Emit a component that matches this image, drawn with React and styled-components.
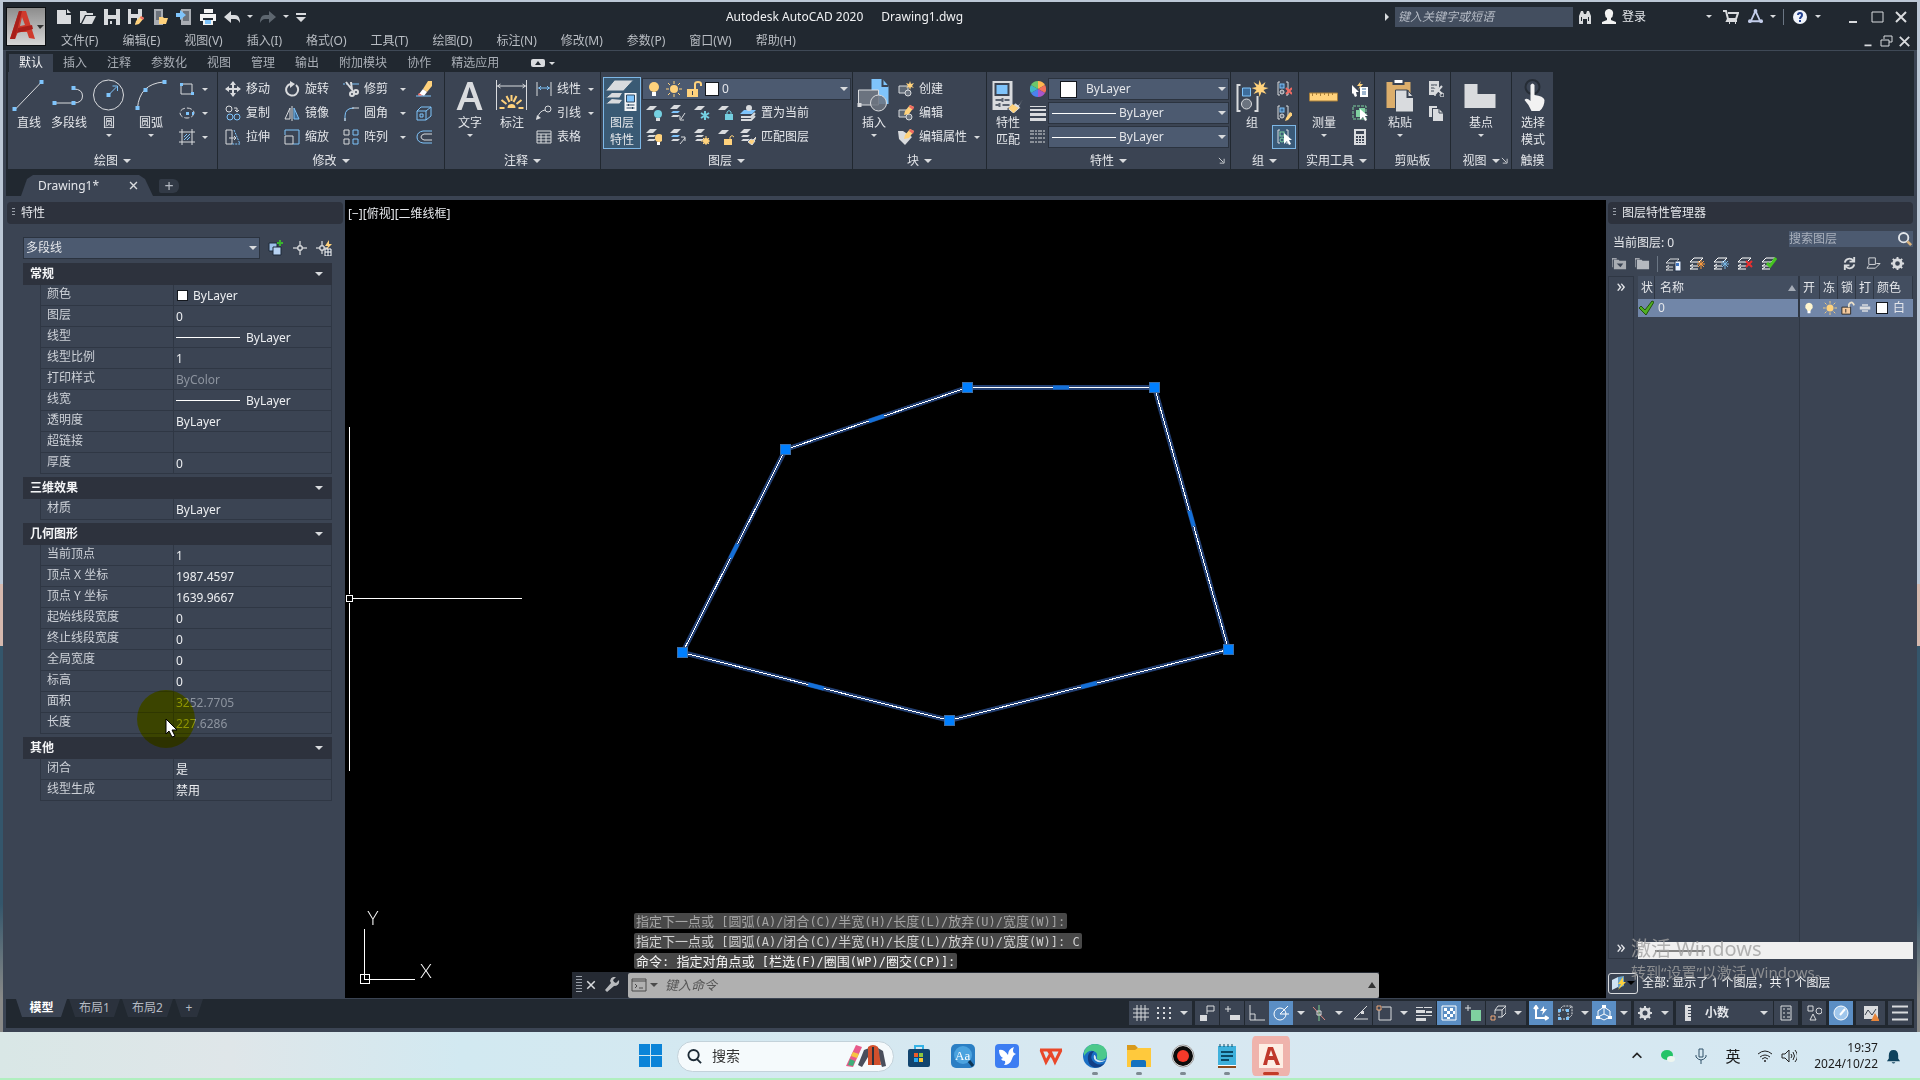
import React from 'react';
import styled, { createGlobalStyle, css } from 'styled-components';

const W = '#d9dbde';
const B = '#7fc4fb';
const Y = '#ffd27c';
const G = '#7fd0a0';
const T = '#74cfe0';
const R = '#f06a62';

const sheet = (x, y, fill) => <path d={`M${x + 4} ${y}h7l-4 4h-7z`} fill={fill} />;
const stack = (fill) => (
  <>
    {sheet(0, 0, W)}
    <path d="M3 6h7l-2 2H1z" fill={fill || W} />
    <path d="M3 10h7l-2 2H1z" fill={W} />
  </>
);
const brackets = (
  <>
    <path d="M4 1H2v13h2M10 1h2v13h-2" fill="none" stroke={W} />
    <rect x="4" y="3" width="4" height="4" fill="#3d6d9c" stroke={B} />
    <circle cx="6" cy="11" r="2" fill="#6b737f" stroke={W} />
  </>
);
const broom = <path d="M16 8l-3 3-2-1-3 3 4 3 3-4-1-1 3-2z" fill={Y} stroke={W} strokeWidth="1" />;

const ICONS = {
  new: <path d="M1 1h9v5h5v9H1zM11 0v4h4z" fill={W} />,
  open: <path d="M0 2h6l1 2h6v2H5L1 14H0zM6 7h10l-4 8H2z" fill={W} />,
  save: <path d="M0 0h16v16H0zM4 0v6h8V0zM4 10v6h8v-6z M6 12h2v3H6z" fill={W} fillRule="evenodd" />,
  saveas: <><path d="M0 0h14v8l-7 7H0zM3 0v5h7V0zM3 9v6h6V9z" fill={W} fillRule="evenodd" /><path d="M13 7l3 2-5 6-4 1 1-4z" fill={Y} /><path d="M13 7l3 2-1 2-3-2z" fill={R} /></>,
  phoneOpen: <><path d="M2 0h9v16H2z" fill="#a9adb3" /><path d="M4 2h5v9H4z" fill="#6d737c" /><path d="M7 8h4l1 1h4l-2 6H7z" fill={Y} /></>,
  phoneSave: <><path d="M5 0h10v16H5z" fill="#a9adb3" /><path d="M7 2h6v10H7z" fill="#6d737c" /><path d="M0 4h4V1l6 5-6 5V8H0z" fill={B} /></>,
  print: <><path d="M4 0h9v4H4zM0 5h16v7h-3V9H3v3H0zM3 11h10v5H3z" fill="#f2f2f2" /><path d="M5 11h6v4H5z" fill={B} /></>,
  undo: <path d="M0 8l7-6v4h4q5 0 5 8-2-4-5-4H7v4z" fill={W} />,
  redo: <path d="M16 8L9 2v4H5q-5 0-5 8 2-4 5-4h4v4z" fill="#5d666f" />,
  custom: <path d="M3 4h10v2H3zM3 8h10l-5 5z" fill={W} />,
  binoculars: <path d="M2 15V7l2-5h2l1 3h2l1-3h2l2 5v8h-4v-5H6v5zM4 8v4h1V8zM11 8v4h1V8z" fill={W} fillRule="evenodd" />,
  person: <path d="M8 0a4 4 0 0 1 4 5q0 3-2 4v2l5 2v2H1v-2l5-2V9Q4 8 4 5a4 4 0 0 1 4-5z" fill="#f2f2f2" />,
  cart: <path d="M0 2h3l2 8h8l2-6H5M5 10l-1 2h10M6 14h1M12 14h1" fill="none" stroke={W} strokeWidth="2" />,
  share: <><path d="M8 2L3 13h10z" fill="none" stroke="#c3cdea" strokeWidth="2" /><circle cx="8" cy="2" r="2" fill="#c3cdea" /><circle cx="2" cy="13" r="2" fill="#c3cdea" /><circle cx="14" cy="13" r="2" fill="#c3cdea" /></>,
  help: <><circle cx="8" cy="8" r="7" fill="#f1f4fa" /><path d="M6 6q0-2 2-2t2 2q0 1-1 2t-1 2M8 11v2" fill="none" stroke="#23418e" strokeWidth="2" /></>,
  min: <path d="M4 12h8v2H4z" fill={W} />,
  max: <path d="M3 3h11v10H3z" fill="none" stroke={W} strokeWidth="1" />,
  restore: <path d="M6 6V3h8v6h-3M3 7h8v6H3z" fill="none" stroke={W} strokeWidth="1" />,
  close: <path d="M3 3l10 10M13 3L3 13" stroke={W} strokeWidth="2" />,
  rect: <><path d="M2 3h11v10H2z" fill="none" stroke={W} /><path d="M1 2h3v3H1zM12 11h3v3h-3z" fill={B} /></>,
  ellipse: <><ellipse cx="8" cy="8" rx="7" ry="5" fill="none" stroke={W} strokeDasharray="5 2" /><path d="M7 7h3v3H7zM13 7h2v3h-2z" fill={B} /></>,
  hatch: <><path d="M0 3h16M0 13h16M3 0v16M13 0v16" stroke={W} /><path d="M5 8l3-3M5 11l6-6M8 11l3-3" stroke={B} strokeWidth="1" /></>,
  move: <><path d="M8 1v14M1 8h14" stroke={W} strokeWidth="2" /><path d="M8 0l3 4H5zM8 16l3-4H5zM0 8l4-3v6zM16 8l-4-3v6z" fill={W} /></>,
  rotate: <><path d="M6 3a6 6 0 1 0 6 1" fill="none" stroke={W} strokeWidth="2" /><path d="M6 0l5 3-5 4z" fill={W} /></>,
  trim: <><path d="M0 3h6" stroke={B} strokeDasharray="2 1" /><path d="M9 3h7" stroke={B} /><path d="M3 1l7 9M8 1l1 8" stroke={W} strokeWidth="2" /><circle cx="9" cy="13" r="2" fill="none" stroke={W} strokeWidth="2" /><circle cx="13" cy="11" r="2" fill="none" stroke={W} strokeWidth="2" /></>,
  erase: <><path d="M12 0h4v5l-5 6-4-3z" fill={Y} /><path d="M7 8l4 3-3 4-5-2z" fill="#fff" /><path d="M3 12l4 3H3q-2-1 0-3z" fill={R} /><path d="M0 15h15" stroke={B} /></>,
  copy: <><circle cx="4" cy="4" r="3" fill="none" stroke={W} /><circle cx="5" cy="12" r="3" fill="none" stroke={B} /><circle cx="12" cy="12" r="3" fill="none" stroke={B} /><path d="M9 3h3v4M10 5l2 2 2-2" fill="none" stroke={W} /></>,
  mirror: <><path d="M6 3v11H1z" fill="none" stroke={W} /><path d="M8 1v15" stroke={W} /><path d="M10 3v11h5z" fill="#3f6c96" stroke={B} /></>,
  fillet: <><path d="M2 16v-5q0-8 9-8" fill="none" stroke={B} /><path d="M2 16v-3M9 3h7" stroke={W} /></>,
  explode: <path d="M1 6h9v9H1zM1 6l4-4h10v9l-5 4M10 6l5-4M4 9h3v3H4z" fill="none" stroke={B} />,
  stretch: <><path d="M1 1h6v14H1z" fill="none" stroke={W} /><path d="M9 1l6 14H7" fill="none" stroke={B} strokeDasharray="2 1" /><path d="M4 9h7M9 7l2 2-2 2" fill="none" stroke={W} /></>,
  scale: <><path d="M1 6V1h14v14H9" fill="none" stroke={B} /><path d="M1 7h8v8H1z" fill="none" stroke={W} /></>,
  array: <><path d="M1 1h5v5H1zM1 10h5v5H1z" fill="none" stroke={W} /><path d="M10 1h5v5h-5zM10 10h5v5h-5z" fill="none" stroke={B} /></>,
  offset: <><path d="M16 2H7q-6 1-6 6t6 6h9" fill="none" stroke={B} /><path d="M16 5H8Q5 6 5 8t3 3h8" fill="none" stroke={W} /></>,
  linear: <><path d="M1 1v14M15 1v14" stroke={W} /><path d="M2 7h12M5 5L3 7l2 2M11 5l2 2-2 2" fill="none" stroke={B} /></>,
  leader: <><path d="M1 14Q3 6 9 5" fill="none" stroke={W} /><circle cx="12" cy="4" r="3" fill="none" stroke={W} /><path d="M0 15l1-5 4 3z" fill={W} /></>,
  table: <path d="M1 2h14v12H1zM1 5h14M1 8h14M1 11h14M5 5v9M10 5v9" fill="none" stroke={W} />,
  bulb: <><circle cx="8" cy="6" r="5" fill={Y} /><path d="M6 11h4v4H6z" fill="#fff" /></>,
  bulbPale: <><path d="M8 1a5 5 0 0 1 3 9l-1 2H6l-1-2a5 5 0 0 1 3-9z" fill="#fff6cf" /><path d="M6 12h4v3H6z" fill="#fff" /></>,
  sun: <><circle cx="8" cy="8" r="4" fill={Y} /><path d="M8 0v3M8 13v3M0 8h3M13 8h3M2 2l2 2M12 12l2 2M14 2l-2 2M4 12l-2 2" stroke={Y} /></>,
  unlock: <><path d="M1 8h11v8H1z" fill={Y} /><path d="M9 8V3q0-2 3-2t3 2v2" fill="none" stroke={Y} strokeWidth="2" /><path d="M6 10h1v4H6z" fill="#3b4453" /></>,
  layOff: <>{sheet(0, 1, W)}<circle cx="12" cy="9" r="4" fill={T} /><path d="M10 13h4v3h-4z" fill={W} /></>,
  layIso: <>{stack(B)}<path d="M15 8l-4 6M10 11v4h4" fill="none" stroke={W} /></>,
  layFreeze: <>{sheet(0, 1, W)}<path d="M11 6v9M7 8l8 5M15 8l-8 5" stroke={T} strokeWidth="2" /></>,
  layLock: <>{sheet(0, 1, W)}<path d="M7 9h8v6H7z" fill={T} /><path d="M9 9V7q2-3 4 0v2" fill="none" stroke={T} strokeWidth="1" /></>,
  layCurrent: <><path d="M4 5h12l-4 4H0z" fill={B} /><circle cx="9" cy="3" r="3" fill={W} /><path d="M15 8l-4 4H1M15 11l-4 4H1" fill="none" stroke={W} strokeWidth="2" /></>,
  layOn: <>{stack()}<circle cx="13" cy="9" r="4" fill={Y} /><path d="M11 13h3v3h-3z" fill="#fff" /></>,
  layUniso: <>{stack(B)}<path d="M10 15l5-6M11 8h4v4" fill="none" stroke={W} /></>,
  layThaw: <>{stack()}<circle cx="12" cy="12" r="3" fill={Y} /><path d="M12 7v9M7 12h9M9 9l6 6M15 9l-6 6" stroke={Y} /></>,
  layUnlock: <>{sheet(0, 1, W)}<path d="M6 10h8v6H6z" fill={Y} /><path d="M12 10V8q2-3 4 0" fill="none" stroke={Y} /></>,
  layMatch: <>{stack()}{broom}</>,
  create: <><path d="M1 5h9v7H1z" fill="#5d6774" stroke={W} /><circle cx="10" cy="12" r="3" fill="#6b737f" stroke={W} /><path d="M12 0l1 3 3-1-2 3 2 2-3-1-1 3-1-3-3 1 2-2-2-3 3 1z" fill={Y} /></>,
  edit: <><path d="M1 5h9v7H1z" fill="#5d6774" stroke={W} /><circle cx="11" cy="12" r="3" fill="#6b737f" stroke={W} /><path d="M6 10l1-4 5-6 4 2-5 7z" fill={Y} /><path d="M12 0l4 2-1 3-4-3z" fill={R} /></>,
  attr: <><path d="M0 2h5l9 6-7 8-6-6z" fill={W} /><path d="M6 10l1-4 5-6 4 2-5 7z" fill={Y} /><path d="M12 0l4 2-1 3-4-3z" fill={R} /></>,
  lineweight: <path d="M0 1h16v1H0zM0 4h16v2H0zM0 8h16v3H0zM0 13h16v3H0z" fill={W} />,
  linetype: <path d="M0 2h16M0 5h16M0 9h16M0 13h16" stroke={W} strokeDasharray="4 1 2 1" />,
  wheel: <><path d="M8 8V0a8 8 0 0 1 7 4z" fill="#ffb64f" /><path d="M8 8l7-4a8 8 0 0 1 0 8z" fill="#f2705b" /><path d="M8 8l7 4a8 8 0 0 1-7 4z" fill="#a957c9" /><path d="M8 8v8a8 8 0 0 1-7-4z" fill="#4b82ee" /><path d="M8 8l-7 4a8 8 0 0 1 0-8z" fill="#3fb7c4" /><path d="M8 8L1 4a8 8 0 0 1 7-4z" fill="#6cc66a" /></>,
  ungroup: <>{brackets}<path d="M10 7l6 6M16 7l-6 6" stroke={R} strokeWidth="2" /></>,
  groupEdit: <>{brackets}<path d="M14 7l3 2-5 6-3 1 1-3z" fill={Y} /></>,
  groupSel: <><path d="M4 1H2v13h2M10 1h2v13h-2" fill="none" stroke={W} /><rect x="4" y="3" width="4" height="4" fill="none" stroke={G} /><circle cx="6" cy="11" r="2" fill="none" stroke={G} /><path d="M8 4v11l3-3 2 4 2-1-2-4h3z" fill="#fff" /></>,
  quickSel: <><path d="M8 6h8v10H8z" fill="#fff" /><path d="M10 8h4M10 11h4M10 13h4" stroke="#3d6d9c" /><path d="M0 4l7 7H4l1 4-2 1-2-4-1 1z" fill="#fff" /><path d="M9 0L5 5h3L6 9l5-6H8z" fill={Y} /></>,
  selAll: <><path d="M1 1h13v13H1z" fill="none" stroke={G} strokeDasharray="3 1" /><path d="M4 5h3V3h6v6h-3v3H4z" fill={G} /><path d="M8 4v11l3-3 2 4 2-1-2-4h3z" fill="#fff" /></>,
  calc: <path d="M2 0h12v16H2zM4 2v3h8V2zM4 7v2h2V7zM7 7v2h2V7zM10 7v2h2V7zM4 10v2h2v-2zM7 10v2h2v-2zM10 10v2h2v-2zM4 13v1h2v-1zM7 13v1h2v-1zM10 13v1h2v-1z" fill={W} fillRule="evenodd" />,
  cut: <><path d="M1 0h10v7l-4 7H1z" fill={W} /><path d="M3 4h6M3 7h5M3 10h3" stroke="#3b4453" /><path d="M6 5l8 8M14 5l-7 8" stroke={W} strokeWidth="2" /><circle cx="7" cy="14" r="1" fill={W} /><circle cx="14" cy="14" r="2" fill="none" stroke={W} /></>,
  copyClip: <><path d="M1 1h8v2H4v9H1z" fill={W} /><path d="M5 4h6l4 4v8H5z" fill={W} /><path d="M11 4v4h4" fill="none" stroke="#3b4453" /></>,
  addSel: <><path d="M1 3h8v8H1z" fill="#9cc0ea" stroke="#1c2838" /><path d="M5 7h8v8H5z" fill="#b7d2f2" stroke="#1c2838" /><path d="M12 0v6M9 3h6" stroke="#39b52e" strokeWidth="2" /></>,
  pick: <><path d="M8 1v14M1 8h14" stroke="#fff" /><path d="M6 6h4v4H6z" fill="#3b4453" stroke="#fff" /></>,
  quick: <><path d="M6 1v13M0 8h12" stroke="#fff" /><path d="M4 6h4v4H4z" fill="#3b4453" stroke="#fff" /><path d="M13 0L9 6h3l-2 4 6-6h-3z" fill={Y} /><path d="M9 9h6v7H9zM9 12h6M12 9v7" fill="#26344a" stroke="#fff" /></>,
  folderFilter: <><path d="M2 4h5l1 1h7v9H2z" fill="#a9adb3" /><path d="M0 12V3h5" fill="none" stroke={W} /><path d="M5 8h7l-3 4z" fill="#3b4453" /></>,
  folder: <><path d="M2 4h5l1 1h7v9H2z" fill="#b5b9bf" /><path d="M0 12V3h5" fill="none" stroke={W} /></>,
  layState: <><path d="M5 3h9l-4 4H1zM4 9l-3 2h7M4 12l-3 2h7" fill="none" stroke={W} /><path d="M10 5h6v10h-6z" fill="#eaf2ff" stroke="#26344a" /><path d="M11 7h3v3h-3z" fill="#3f76c4" /></>,
  layNew: <><path d="M5 2h9l-4 4H1zM4 8l-3 2h8M4 11l-3 2h8" fill="none" stroke="#fff" /><path d="M12 4v9M8 8h8M9 5l6 6M15 5l-6 6" stroke="#ff9c3d" /></>,
  layNewFrz: <><path d="M5 2h9l-4 4H1zM4 8l-3 2h8M4 11l-3 2h8" fill="none" stroke="#fff" /><path d="M12 4v9M8 8h8M9 5l6 6M15 5l-6 6" stroke="#78b7e6" /></>,
  layDel: <><path d="M5 2h9l-4 4H1zM4 8l-3 2h8M4 11l-3 2h8" fill="none" stroke="#fff" /><path d="M9 5l6 6M15 5l-6 6" stroke="#ea2f2f" strokeWidth="2" /></>,
  laySet: <><path d="M5 2h9l-4 4H1zM4 8l-3 2h8M4 11l-3 2h8" fill="none" stroke="#fff" /><path d="M6 7l3 3 6-8" fill="none" stroke="#45c520" strokeWidth="3" /></>,
  refresh: <path d="M3 7a5 5 0 0 1 9-2M13 9a5 5 0 0 1-9 2M13 1v5H8M3 15v-5h5" fill="none" stroke={W} strokeWidth="2" />,
  filterLine: <path d="M3 2h7v7H3zM1 13h9l5-5h-4M1 13l2-3" fill="none" stroke={W} />,
  gear: <><circle cx="8" cy="8" r="4" fill="none" stroke={W} strokeWidth="3" /><path d="M8 1v3M8 12v3M1 8h3M12 8h3M3 3l2 2M11 11l2 2M13 3l-2 2M5 11l-2 2" stroke={W} strokeWidth="2" /></>,
  check: <path d="M1 8l2-2 4 4 7-9 2 1-8 13z" fill="#4fae22" stroke="#23500d" />,
  printer: <path d="M4 3h8v2H4zM1 6h14v4H1zM4 11h8v2H4z" fill={W} />,
  unlockDark: <><path d="M1 7h10v8H1z" fill="#f4c99c" stroke="#222" /><path d="M9 7V4q2-4 5-1l1 2" fill="none" stroke="#eadfc8" strokeWidth="2" /><path d="M5 9h1v4H5z" fill="#222" /></>,
  grid: <path d="M4 0v16M8 0v16M12 0v16M0 4h16M0 8h16M0 12h16" stroke={W} />,
  dots: <path d="M1 2h2v2H1zM7 2h2v2H7zM13 2h2v2h-2zM1 7h2v2H1zM7 7h2v2H7zM13 7h2v2h-2zM1 12h2v2H1zM7 12h2v2H7zM13 12h2v2h-2z" fill={W} />,
  infer: <><path d="M8 9V1h7v5H8" fill="none" stroke={W} /><path d="M1 10h7v6H1z" fill={W} /></>,
  dyn: <><path d="M4 1v6M1 4h6" stroke={W} /><path d="M6 10h10v5H6z" fill={W} /></>,
  ortho: <path d="M1 0v15h15M1 9h5v6" fill="none" stroke={W} />,
  polar: <><circle cx="7" cy="9" r="6" fill="none" stroke="#fff" /><path d="M7 9h9M7 9l8-8" stroke="#fff" /></>,
  iso: <><path d="M2 2l12 13" stroke="#e08a80" /><path d="M8 0v16" stroke="#7fcf90" /><path d="M6 6h4v4H6z" fill="none" stroke={W} /></>,
  otrack: <><path d="M15 1L2 14h14" fill="none" stroke={W} /><path d="M9 6h3v3H9z" fill={W} /></>,
  osnap: <><path d="M3 5v10h12V2H6" fill="none" stroke={W} /><path d="M1 1h4v4H1z" fill="none" stroke="#f0a878" strokeWidth="1" /></>,
  lw: <path d="M0 2h7v1H0zM8 2h8v1H8zM0 5h9v3H0zM10 6h6v2h-6zM0 10h16v1H0zM0 13h10v3H0z" fill={W} />,
  transp: <><path d="M1 1h14v14H1z" fill="none" stroke="#fff" strokeWidth="1" /><path d="M3 3h3v3H3zM9 3h3v3H9zM6 6h3v3H6zM12 6h2v3h-2zM3 9h3v3H3zM9 9h3v3H9zM6 12h3v2H6z" fill="#fff" /></>,
  cycle: <><path d="M3 0v6M0 3h6" stroke={W} /><path d="M6 5h10v11H6z" fill={G} /></>,
  osnap3: <><path d="M5 9V5l3-4h8v7l-4 4H8M5 5h7v7M12 5l4-4" fill="none" stroke={W} /><path d="M1 11h4v4H1z" fill="none" stroke="#f0a878" strokeWidth="1" /></>,
  ducs: <><path d="M3 2v11h12M1 4l2-3 2 3M12 11l3 2-3 2" fill="none" stroke="#fff" strokeWidth="2" /><path d="M11 1L7 6h3l-1 4 5-6h-3z" fill="#fff" /></>,
  selFilter: <><path d="M2 5h9v9H2zM2 5l4-4h9v9l-4 4M11 5l4-4" fill="none" stroke={W} strokeDasharray="2 1" /><path d="M1 4h3v3H1zM9 4h3v3H9zM1 12h3v3H1zM9 12h3v3H9z" fill={B} /></>,
  gizmo: <><path d="M8 2l6 4v6l-6 3-6-3V6zM8 2v7l6 3M8 9l-6 3" fill="none" stroke="#fff" /><path d="M6 0h4v3H6zM0 11h4v3H0zM12 11h4v3h-4z" fill="#fff" /></>,
  ruler: <path d="M5 0h6v2H8v1h3v2H8v1h3v2H8v1h3v2H8v1h3v4H5z" fill={W} />,
  qprops: <path d="M3 1h10v14H3zM5 4h2M9 4h3M5 8h2M9 8h3M5 12h2M9 12h3" fill="none" stroke={W} strokeWidth="1" />,
  isolate: <><path d="M2 1h5v5H2z" fill="none" stroke={W} /><circle cx="13" cy="6" r="3" fill="none" stroke={W} /><path d="M7 9l3 6H4z" fill="none" stroke={W} /></>,
  perf: <><circle cx="8" cy="8" r="7" fill="#9fc6ec" stroke="#fff" /><path d="M7 10l5-6" stroke="#fff" strokeWidth="2" /></>,
  hw: <><path d="M1 1h14v13H1z" fill={W} /><path d="M2 10l3-5 4 5 4-6" fill="none" stroke="#39424e" /><path d="M12 8l5 8H8z" fill="#e8863a" /></>,
  menu: <path d="M0 1h16v1H0zM0 7h16v1H0zM0 14h16v1H0z" fill={W} stroke={W} />,
  wrench: <path d="M15 3l-3 3-2-1-1-2 3-3q-5-1-6 4l1 2-6 7 2 2 7-6q6 0 5-6z" fill="#b8babd" />,
  terminal: <path d="M1 2h14v12H1zM1 4h14M4 7l2 2-2 2M8 11h4" fill="none" stroke="#4a4a4a" strokeWidth="1" />,
  chevron: <path d="M3 10l5-5 5 5" fill="none" stroke="#222" strokeWidth="2" />,
  wechat: <><ellipse cx="7" cy="7" rx="6" ry="5" fill="#24c367" /><ellipse cx="11" cy="11" rx="4" ry="3" fill="#eef6f0" /></>,
  mic: <path d="M6 1h4v8H6zM3 7v2q5 6 10 0V7M8 12v4" fill="none" stroke="#2f5068" strokeWidth="1" />,
  wifi: <><path d="M1 6q7-6 14 0M3 9q5-4 10 0M5 11q3-3 6 0" fill="none" stroke="#222" /><circle cx="8" cy="13" r="1" fill="#222" /></>,
  speaker: <path d="M1 6h3l4-4v12l-4-4H1zM10 6q2 2 0 4M12 4q3 4 0 8M14 2q5 6 0 12" fill="none" stroke="#222" />,
  bell: <path d="M8 1q5 0 5 6v3l2 3H1l2-3V7q0-6 5-6zM6 14h4q-2 3-4 0z" fill="#10435e" />,
  search: <path d="M7 1a5 5 0 1 1 0 11 5 5 0 1 1 0-11M11 11l4 4" fill="none" stroke="#1d2b36" strokeWidth="2" />,
  magnifier: <><circle cx="6" cy="6" r="5" fill="#4d5a6e" stroke="#e3e6ea" strokeWidth="2" /><path d="M10 10l4 4" stroke="#d9b27c" strokeWidth="3" /></>,
};

const BIG = {
  line: <><path d="M3 30L29 3" stroke={W} strokeWidth="1" /><path d="M0 28h4v4H0zM27 1h4v4h-4z" fill={B} /></>,
  pline: <><path d="M2 24h19q9 0 9-7t-9-7" fill="none" stroke={W} /><path d="M0 22h4v4H0zM19 22h4v4h-4zM19 7h4v4h-4z" fill={B} /></>,
  circle: <><circle cx="16" cy="16" r="15" fill="none" stroke={W} /><path d="M16 16l8-8M20 7h5v5" fill="none" stroke={B} strokeWidth="1" /><path d="M14 14h4v4h-4z" fill={B} /></>,
  arc: <><path d="M3 29Q5 5 29 3" fill="none" stroke={W} strokeWidth="1" /><path d="M1 27h4v4H1zM9 9h4v4H9zM28 1h4v4h-4z" fill={B} /></>,
  text: <path d="M3 31L14 3h5l10 28h-5l-3-8H11l-3 8zM13 19h7l-4-11z" fill={W} fillRule="evenodd" />,
  dim: <><path d="M1 1v30M31 1v30" stroke={W} /><path d="M2 7h28M5 5L2 7l3 2M27 5l3 2-3 2" fill="none" stroke={W} /><path d="M4 29h5M23 29h5M6 21l5 4M26 21l-5 4M11 17l3 6M21 17l-3 6M16 16v6" stroke={Y} strokeWidth="2" /><path d="M12 29a4 4 0 0 1 8 0z" fill={Y} /></>,
  layerProps: <><path d="M9 1h19L18 12H0zM6 14l-6 5h14l3-5M6 20l-6 5h14l3-4" fill={W} stroke="#3a5a74" /><path d="M19 14h12v18H19z" fill="#f4f6f8" /><path d="M21 16h8v7h-8z" fill={B} stroke="#2c4760" /><path d="M21 26h8M21 29h8M23 25v2M27 28v2" stroke="#2c4760" /></>,
  insert: <><path d="M14 0h11l6 7v18H14z" fill={B} /><path d="M25 0v7h6" fill="none" stroke="#3b4453" strokeWidth="2" /><path d="M1 11h20v15H1z" fill="#6b737f" stroke={W} /><circle cx="21" cy="24" r="8" fill="#6b737fdd" stroke={W} /><path d="M0 24h4v4H0z" fill={W} /></>,
  matchProps: <><path d="M1 2h20v29H1z" fill={W} /><path d="M4 5h13v11H4z" fill={B} stroke="#3b4453" strokeWidth="2" /><path d="M4 21h6M13 21h5M4 26h4M11 26h7M11 19v4M8 24v4" stroke="#5a6370" strokeWidth="2" /><path d="M32 19l-5 7-3-2-8 6 6 5 7-6-1-2z" fill={W} stroke="#3b4453" /><path d="M17 29l4-4 6 4-5 5z" fill={Y} /></>,
  group: <><path d="M5 6H2v26h3M19 32h3V17" fill="none" stroke={W} strokeWidth="2" /><path d="M7 9h8v8H7z" fill="#3d6d9c" stroke={B} /><circle cx="11" cy="25" r="5" fill="#6b737f" stroke={W} /><path d="M24 1l2 5 4-3-2 5 5 1-5 2 3 4-5-2-2 5-1-5-5 2 3-4-5-2 5-1-3-5 5 3z" fill={Y} /></>,
  measure: <path d="M2 14h28v8H2zM5 14v3M9 14v2M13 14v3M17 14v2M21 14v3M25 14v2" fill={Y} stroke="#a87f3a" strokeWidth="1" />,
  paste: <><path d="M3 3h24v26H3z" fill="#dcae6b" /><path d="M10 0h10v5H10z" fill="#fff" stroke="#3b4453" strokeWidth="2" /><path d="M12 11h12l6 7v15H12z" fill={W} stroke="#3b4453" /><path d="M24 11v7h6" fill="none" stroke="#3b4453" strokeWidth="2" /></>,
  base: <path d="M0 5h13v10h18v14H0z" fill={W} />,
  hand: <><circle cx="16" cy="8" r="7" fill="none" stroke="#262d36" strokeWidth="2" /><path d="M14 6q2-3 4 0v10q9 1 10 5 0 7-5 11h-8q-3-7-7-11 2-3 6 1z" fill="#f2f2f2" /></>,
};

function Icon({ name, size = 16 }) {
  const big = BIG[name];
  return (
    <svg width={size} height={size} viewBox={big ? '0 0 33 34' : '0 0 16 16'} aria-hidden="true">
      {big || ICONS[name]}
    </svg>
  );
}

const PROPERTY_SECTIONS = [
  {
    title: '常规',
    rows: [
      { label: '颜色', value: 'ByLayer', swatch: true },
      { label: '图层', value: '0' },
      { label: '线型', value: 'ByLayer', line: true },
      { label: '线型比例', value: '1' },
      { label: '打印样式', value: 'ByColor', muted: true },
      { label: '线宽', value: 'ByLayer', line: true },
      { label: '透明度', value: 'ByLayer' },
      { label: '超链接', value: '' },
      { label: '厚度', value: '0' },
    ],
  },
  { title: '三维效果', rows: [{ label: '材质', value: 'ByLayer' }] },
  {
    title: '几何图形',
    rows: [
      { label: '当前顶点', value: '1' },
      { label: '顶点 X 坐标', value: '1987.4597' },
      { label: '顶点 Y 坐标', value: '1639.9667' },
      { label: '起始线段宽度', value: '0' },
      { label: '终止线段宽度', value: '0' },
      { label: '全局宽度', value: '0' },
      { label: '标高', value: '0' },
      { label: '面积', value: '3252.7705', muted: true },
      { label: '长度', value: '227.6286', muted: true },
    ],
  },
  {
    title: '其他',
    rows: [
      { label: '闭合', value: '是' },
      { label: '线型生成', value: '禁用' },
    ],
  },
];

const MENUS = ['文件(F)', '编辑(E)', '视图(V)', '插入(I)', '格式(O)', '工具(T)', '绘图(D)', '标注(N)', '修改(M)', '参数(P)', '窗口(W)', '帮助(H)'];
const TABS = ['默认', '插入', '注释', '参数化', '视图', '管理', '输出', '附加模块', '协作', '精选应用'];

const HISTORY = [
  { text: '指定下一点或 [圆弧(A)/闭合(C)/半宽(H)/长度(L)/放弃(U)/宽度(W)]:', color: '#a4a4a4' },
  { text: '指定下一点或 [圆弧(A)/闭合(C)/半宽(H)/长度(L)/放弃(U)/宽度(W)]: C', color: '#d0d0d0' },
  { text: '命令: 指定对角点或 [栏选(F)/圈围(WP)/圈交(CP)]:', color: '#f4f4f4' },
];

const STATUS = [
  [['grid', 24, '栅格'], ['dots', 22, '捕捉'], ['caret', 17]],
  [['infer', 25, '推断约束'], ['dyn', 25, '动态输入'], ['ortho', 24, '正交'], ['polar', 24, '极轴', true], ['caret', 15], ['iso', 22, '等轴测'], ['caret', 18], ['otrack', 25, '对象捕捉追踪'], ['osnap', 22, '对象捕捉'], ['caret', 17], ['lw', 25, '线宽'], ['transp', 24, '透明度', true], ['cycle', 25, '选择循环'], ['osnap3', 24, '三维对象捕捉'], ['caret', 16]],
  [['ducs', 24, '动态 UCS', true], ['selFilter', 24, '选择过滤'], ['caret', 15], ['gizmo', 24, '小控件', true], ['caret', 15]],
  [['gear', 22, '切换工作空间'], ['caret', 17]],
];

const VERTICES = [[785, 449], [967, 387], [1154, 387], [1228, 649], [949, 720], [682, 652]];

function Combo({ label, value, children, ...rest }) {
  return (
    <ComboBox {...rest}>
      {children}
      <select aria-label={label} defaultValue={value}>
        <option>{value}</option>
      </select>
      <Caret $size={4} />
    </ComboBox>
  );
}

function Large({ icon, label, sub, caret, w, active }) {
  return (
    <LargeButton $w={w} $active={active}>
      <Icon name={icon} size={34} />
      <span>{label}</span>
      {sub && <span>{sub}</span>}
      {caret && <Caret $size={3} />}
    </LargeButton>
  );
}

function ToolItem({ icon, label, caret }) {
  return (
    <Tool aria-label={label || icon}>
      <Icon name={icon} />
      {label}
      {caret && <CaretSlot><Caret $size={3} /></CaretSlot>}
    </Tool>
  );
}

function Panel({ title, w, noCaret, launcher, children }) {
  return (
    <PanelBox $w={w}>
      <PanelBody>{children}</PanelBody>
      <PanelTitle>
        {title}
        {!noCaret && <Caret $size={4} />}
        {launcher && (
          <Launcher aria-label="对话框" $near={launcher === 'near'}>
            <svg width="7" height="7" viewBox="0 0 8 8"><path d="M1 1l5 5M7 2v5H2" fill="none" stroke={W} strokeWidth="1" /></svg>
          </Launcher>
        )}
      </PanelTitle>
    </PanelBox>
  );
}

function Header() {
  return (
    <TitleBlock>
      <LogoButton aria-label="应用程序菜单">
        <svg width="38" height="37" viewBox="0 0 38 37">
          <path d="M3 31L12 3h7l9 28-6-1-2-6H11l-3 7zM13 18l5-1-3-8z" fill="#cf3a2c" fillRule="evenodd" />
          <path d="M3 31L12 3h3L8 31zM11 20l14-3 1 4-16 4z" fill="#a81f1a" />
          <path d="M30 17h7l-4 4z" fill="#333" />
        </svg>
      </LogoButton>
      <TitleRows>
        <TitleRow>
          {['new', 'open', 'save', 'saveas', 'phoneOpen', 'phoneSave', 'print', 'undo'].map((n) => (
            <IconButton key={n} aria-label={n}><Icon name={n} /></IconButton>
          ))}
          <CaretSlot><Caret $size={3} /></CaretSlot>
          <IconButton aria-label="redo"><Icon name="redo" /></IconButton>
          <CaretSlot><Caret $size={3} /></CaretSlot>
          <IconButton $w={18} aria-label="custom"><Icon name="custom" /></IconButton>
          <AppTitle><span>Autodesk AutoCAD 2020</span><span>Drawing1.dwg</span></AppTitle>
          <RightCaret />
          <HelpSearch type="text" aria-label="搜索帮助" placeholder="键入关键字或短语" />
          <IconButton aria-label="搜索"><Icon name="binoculars" /></IconButton>
          <LoginButton><Icon name="person" />登录<Caret $size={3} /></LoginButton>
          <IconButton aria-label="应用商店"><Icon name="cart" /></IconButton>
          <IconButton aria-label="保持连接"><Icon name="share" size={15} /></IconButton>
          <CaretSlot><Caret $size={3} /></CaretSlot>
          <Divider />
          <IconButton aria-label="帮助"><Icon name="help" /></IconButton>
          <CaretSlot><Caret $size={3} /></CaretSlot>
          <WindowButtons>
            <IconButton aria-label="最小化"><Icon name="min" /></IconButton>
            <IconButton aria-label="最大化"><Icon name="max" /></IconButton>
            <IconButton aria-label="关闭"><Icon name="close" /></IconButton>
          </WindowButtons>
        </TitleRow>
        <MenuRow>
          {MENUS.map((m) => <MenuButton key={m}>{m}</MenuButton>)}
          <DocButtons>
            <IconButton $w={18} aria-label="最小化图形"><Icon name="min" size={14} /></IconButton>
            <IconButton $w={18} aria-label="还原图形"><Icon name="restore" /></IconButton>
            <IconButton $w={18} aria-label="关闭图形"><Icon name="close" size={15} /></IconButton>
          </DocButtons>
        </MenuRow>
      </TitleRows>
    </TitleBlock>
  );
}

function Ribbon() {
  return (
    <RibbonBar>
      <Panel title="绘图" w={210}>
        <Large icon="line" label="直线" w={38} />
        <Large icon="pline" label="多段线" w={42} />
        <Large icon="circle" label="圆" w={38} caret />
        <Large icon="arc" label="圆弧" w={46} caret />
        <ToolColumn $w={34}>
          <ToolItem icon="rect" caret />
          <ToolItem icon="ellipse" caret />
          <ToolItem icon="hatch" caret />
        </ToolColumn>
      </Panel>
      <Panel title="修改" w={227}>
        <ToolColumn $w={56}>
          <ToolItem icon="move" label="移动" />
          <ToolItem icon="copy" label="复制" />
          <ToolItem icon="stretch" label="拉伸" />
        </ToolColumn>
        <ToolColumn $w={56}>
          <ToolItem icon="rotate" label="旋转" />
          <ToolItem icon="mirror" label="镜像" />
          <ToolItem icon="scale" label="缩放" />
        </ToolColumn>
        <ToolColumn $w={70}>
          <ToolItem icon="trim" label="修剪" caret />
          <ToolItem icon="fillet" label="圆角" caret />
          <ToolItem icon="array" label="阵列" caret />
        </ToolColumn>
        <ToolColumn $w={20}>
          <ToolItem icon="erase" />
          <ToolItem icon="explode" />
          <ToolItem icon="offset" />
        </ToolColumn>
      </Panel>
      <Panel title="注释" w={156}>
        <Large icon="text" label="文字" w={46} caret />
        <Large icon="dim" label="标注" w={38} />
        <ToolColumn $w={64}>
          <ToolItem icon="linear" label="线性" caret />
          <ToolItem icon="leader" label="引线" caret />
          <ToolItem icon="table" label="表格" />
        </ToolColumn>
      </Panel>
      <Panel title="图层" w={252}>
        <Large icon="layerProps" label="图层" sub="特性" w={38} active />
        <LayerTools>
          <Combo label="当前图层" value="0" $gap={4}>
            <Icon name="bulb" /><Icon name="sun" /><Icon name="unlock" /><Swatch $size={12} />
          </Combo>
          <ToolRow>
            {['layOff', 'layIso', 'layFreeze', 'layLock'].map((n) => <IconButton key={n} aria-label={n}><Icon name={n} /></IconButton>)}
            <ToolItem icon="layCurrent" label="置为当前" />
          </ToolRow>
          <ToolRow>
            {['layOn', 'layUniso', 'layThaw', 'layUnlock'].map((n) => <IconButton key={n} aria-label={n}><Icon name={n} /></IconButton>)}
            <ToolItem icon="layMatch" label="匹配图层" />
          </ToolRow>
        </LayerTools>
      </Panel>
      <Panel title="块" w={134}>
        <Large icon="insert" label="插入" w={38} caret />
        <ToolColumn $w={88}>
          <ToolItem icon="create" label="创建" />
          <ToolItem icon="edit" label="编辑" />
          <ToolItem icon="attr" label="编辑属性" caret />
        </ToolColumn>
      </Panel>
      <Panel title="特性" w={244} launcher="far">
        <Large icon="matchProps" label="特性" sub="匹配" w={38} />
        <PropertyCombos>
          <Icon name="wheel" />
          <Combo label="对象颜色" value="ByLayer" $pad={12} $gap={10}><Swatch $size={15} /></Combo>
          <Icon name="lineweight" />
          <Combo label="线宽" value="ByLayer" $pad={3} $gap={3}><LineSample $w={64} /></Combo>
          <Icon name="linetype" />
          <Combo label="线型" value="ByLayer" $pad={3} $gap={3}><LineSample $w={64} /></Combo>
        </PropertyCombos>
      </Panel>
      <Panel title="组" w={68}>
        <Large icon="group" label="组" w={38} />
        <IconColumn>
          <IconButton aria-label="解除编组"><Icon name="ungroup" /></IconButton>
          <IconButton aria-label="组编辑"><Icon name="groupEdit" /></IconButton>
          <IconButton aria-label="启用组选择" $active><Icon name="groupSel" /></IconButton>
        </IconColumn>
      </Panel>
      <Panel title="实用工具" w={76}>
        <Large icon="measure" label="测量" w={46} caret />
        <IconColumn>
          <IconButton aria-label="快速选择"><Icon name="quickSel" /></IconButton>
          <IconButton aria-label="全部选择"><Icon name="selAll" /></IconButton>
          <IconButton aria-label="计算器"><Icon name="calc" /></IconButton>
        </IconColumn>
      </Panel>
      <Panel title="剪贴板" w={76} noCaret>
        <Large icon="paste" label="粘贴" w={46} caret />
        <IconColumn>
          <IconButton aria-label="剪切"><Icon name="cut" /></IconButton>
          <IconButton aria-label="复制裁剪"><Icon name="copyClip" /></IconButton>
        </IconColumn>
      </Panel>
      <Panel title="视图" w={61} launcher="near">
        <Large icon="base" label="基点" w={56} caret />
      </Panel>
      <Panel title="触摸" w={42} noCaret>
        <Large icon="hand" label="选择" sub="模式" w={38} />
      </Panel>
    </RibbonBar>
  );
}

function PropertiesPalette() {
  return (
    <LeftPalette>
      <PaletteTitle><Grip />特性</PaletteTitle>
      <PaletteBody>
        <SelectionRow>
          <Combo label="选择对象" value="多段线" $pad={2} />
          <Icon name="addSel" /><Icon name="pick" /><Icon name="quick" />
        </SelectionRow>
        {PROPERTY_SECTIONS.map((s) => (
          <Section key={s.title}>
            <SectionTitle>{s.title}<Caret $size={4} /></SectionTitle>
            <PropTable>
              <tbody>
                {s.rows.map((r) => (
                  <tr key={r.label}>
                    <th scope="row">{r.label}</th>
                    <PropValue $muted={r.muted}>
                      <div>
                        {r.swatch && <Swatch $size={9} />}
                        {r.line && <LineSample $w={64} />}
                        {r.value}
                      </div>
                    </PropValue>
                  </tr>
                ))}
              </tbody>
            </PropTable>
          </Section>
        ))}
      </PaletteBody>
      <Pointer>
        <svg width="60" height="60" viewBox="0 0 60 60">
          <circle cx="30" cy="30" r="29" fill="#ffff00" />
        </svg>
      </Pointer>
      <PointerArrow width="13" height="20" viewBox="0 0 13 20">
        <path d="M1 1v15l3-3 3 6 3-1-3-6h5z" fill="#fff" stroke="#000" />
      </PointerArrow>
    </LeftPalette>
  );
}

function Drawing() {
  const points = VERTICES.map((v) => v.join(',')).join(' ');
  return (
    <DrawingSvg viewBox="345 200 1261 798" preserveAspectRatio="xMidYMid meet">
      <g shapeRendering="crispEdges" stroke="#fff" fill="none">
        <path d="M349.5 427V594M349.5 603V771M353 598.5H522M346.5 595.5h6v6h-6z" />
        <path d="M364.5 929V979.5H415M360.5 974.5h9v9h-9z" />
      </g>
      <g fill="#fff" fontFamily="Lato, sans-serif" fontWeight="300" fontSize="19" textAnchor="middle">
        <text x="373" y="925">Y</text>
        <text x="426" y="978">X</text>
      </g>
      <polygon points={points} fill="none" stroke="#223f72" strokeWidth="5" transform="translate(0.5 0.5)" />
      <polygon points={points} fill="none" stroke="#fff" strokeWidth="1" shapeRendering="crispEdges" transform="translate(0.5 0.5)" />
      {VERTICES.map(([x, y], i) => {
        const [nx, ny] = VERTICES[(i + 1) % VERTICES.length];
        const len = Math.hypot(nx - x, ny - y);
        const dx = ((nx - x) / len) * 8;
        const dy = ((ny - y) / len) * 8;
        const mx = (x + nx) / 2;
        const my = (y + ny) / 2;
        return (
          <g key={i} transform="translate(0.5 0.5)">
            <path d={`M${mx - dx} ${my - dy}L${mx + dx} ${my + dy}`} stroke="#1470d8" strokeWidth="4" />
            <rect x={x - 5} y={y - 5} width="10" height="10" fill="#007fff" stroke="#3c6ea8" />
          </g>
        );
      })}
    </DrawingSvg>
  );
}

function CommandLine() {
  return (
    <CommandArea>
      {HISTORY.map((h) => (
        <HistoryLine key={h.text} $color={h.color}>
          {h.text.match(/[\x20-\x7e]+|[^\x20-\x7e]+/g).map((part, i) => (
            part.charCodeAt(0) < 127 ? <code key={i}>{part}</code> : part
          ))}
        </HistoryLine>
      ))}
      <CommandBar>
        <Grip $tall />
        <IconButton $w={18} aria-label="关闭命令行"><Icon name="close" size={12} /></IconButton>
        <IconButton aria-label="自定义"><Icon name="wrench" /></IconButton>
        <CommandBox>
          <Icon name="terminal" />
          <Caret $size={4} $color="#4a4a4a" />
          <input type="text" aria-label="键入命令" placeholder="键入命令" />
          <UpCaret />
        </CommandBox>
      </CommandBar>
    </CommandArea>
  );
}

function LayerPalette() {
  return (
    <RightPalette>
      <PaletteTitle><Grip />图层特性管理器</PaletteTitle>
      <LayerHead>
        <span>当前图层: 0</span>
        <LayerSearch>
          <input type="text" aria-label="搜索图层" placeholder="搜索图层" />
          <Icon name="magnifier" size={15} />
        </LayerSearch>
      </LayerHead>
      <LayerToolbar>
        <IconButton $w={23} aria-label="新建特性过滤器"><Icon name="folderFilter" size={15} /></IconButton>
        <IconButton $w={23} aria-label="新建组过滤器"><Icon name="folder" size={15} /></IconButton>
        <Divider />
        {['layState', 'layNew', 'layNewFrz', 'layDel', 'laySet'].map((n) => (
          <IconButton key={n} aria-label={n}><Icon name={n} /></IconButton>
        ))}
        <Spacer />
        {['refresh', 'filterLine', 'gear'].map((n) => (
          <IconButton key={n} aria-label={n}><Icon name={n} size={15} /></IconButton>
        ))}
      </LayerToolbar>
      <LayerMain>
        <FilterStrip><span>»</span><span>»</span></FilterStrip>
        <LayerList>
          <LayerTable>
            <colgroup>
              <col width="17" /><col /><col width="20" /><col width="18" /><col width="18" /><col width="18" /><col width="39" />
            </colgroup>
            <thead>
              <tr><th>状</th><th><NameHead>名称<UpCaret $light /></NameHead></th><th>开</th><th>冻</th><th>锁</th><th>打</th><th>颜色</th></tr>
            </thead>
            <tbody>
              <tr>
                <td><Icon name="check" /></td>
                <td>0</td>
                <td><Icon name="bulbPale" size={12} /></td>
                <td><Icon name="sun" size={14} /></td>
                <td><Icon name="unlockDark" size={14} /></td>
                <td><Icon name="printer" size={12} /></td>
                <td><ColorCell><Swatch $size={10} />白</ColorCell></td>
              </tr>
            </tbody>
          </LayerTable>
          <ListFill />
          <ListScroll><i /></ListScroll>
        </LayerList>
      </LayerMain>
      <LayerFoot>
        <button aria-label="状态">
          <svg width="16" height="16" viewBox="0 0 16 16"><path d="M1 5l6-3v10l-6 3z" fill="#cfe3f2" /><path d="M7 2l6-1v10l-6 2z" fill="#6aa2c8" /><path d="M12 2L7 9h3l-3 6 8-8h-3z" fill="#ffd23f" /></svg>
          <Caret $size={4} $color="#000" />
        </button>
        全部: 显示了 1 个图层，共 1 个图层
      </LayerFoot>
      <Watermark><b>激活 Windows</b><span>转到“设置”以激活 Windows。</span></Watermark>
    </RightPalette>
  );
}

function StatusBar() {
  return (
    <StatusRow>
      <LayoutTabs>
        <LayoutTab $active>模型</LayoutTab>
        <LayoutTab>布局1</LayoutTab>
        <LayoutTab>布局2</LayoutTab>
        <LayoutTab $plus aria-label="新建布局">+</LayoutTab>
      </LayoutTabs>
      <StatusTools>
        {STATUS.map((group, i) => (
          <StatusGroup key={i}>
            {group.map(([name, w, label, active], j) => (
              <StatusButton key={j} $w={w} $active={active} aria-label={label || '更多'}>
                {name === 'caret' ? <Caret $size={4} /> : <Icon name={name} />}
              </StatusButton>
            ))}
          </StatusGroup>
        ))}
        <StatusGroup>
          <StatusButton $w={24} aria-label="单位"><Icon name="ruler" /></StatusButton>
          <UnitSelect>
            <select aria-label="单位" defaultValue="小数"><option>小数</option></select>
            <Caret $size={4} />
          </UnitSelect>
          <StatusButton $w={25} aria-label="快捷特性"><Icon name="qprops" /></StatusButton>
        </StatusGroup>
        <StatusGroup>
          <StatusButton $w={24} aria-label="隔离对象"><Icon name="isolate" /></StatusButton>
        </StatusGroup>
        <StatusGroup>
          <StatusButton $w={24} $active aria-label="图形性能"><Icon name="perf" /></StatusButton>
        </StatusGroup>
        <StatusGroup>
          <StatusButton $w={29} aria-label="硬件加速"><Icon name="hw" /></StatusButton>
        </StatusGroup>
        <StatusGroup>
          <StatusButton $w={24} aria-label="自定义"><Icon name="menu" /></StatusButton>
        </StatusGroup>
      </StatusTools>
    </StatusRow>
  );
}

const TASK_ICONS = [
  { name: 'Store', art: <><path d="M8 6V2h8v4" fill="none" stroke="#36b3e6" strokeWidth="2" /><rect x="1" y="5" width="22" height="18" rx="2" fill="#12456f" /><path d="M7 9h4v4H7z" fill="#f05b2a" /><path d="M12 9h4v4h-4z" fill="#8cc63f" /><path d="M7 14h4v4H7z" fill="#2aa8f0" /><path d="M12 14h4v4h-4z" fill="#fdc52f" /></> },
  { name: '词典', art: <><rect x="0" y="0" width="24" height="24" rx="5" fill="#2b7fc4" /><circle cx="12" cy="11" r="9" fill="#4ba3df" /><path d="M18 17l4 5" stroke="#0d3555" strokeWidth="3" /><text x="4" y="16" fontSize="13" fontFamily="Liberation Serif, serif" fill="#fff">Aa</text></> },
  { name: '飞鸟', art: <><rect width="24" height="24" rx="4" fill="#3d7df2" /><path d="M4 6q5-1 9 5 0-6 6-8-2 4 0 6l2 1q-3 1-4 5-2 6-8 6 2-2 1-4-3 0-4-2l2-1Q4 12 4 6z" fill="#fff" /></> },
  { name: 'WPS', art: <path d="M1 6h22M2 6l5 12 5-9 4 9 6-12M9 6l7 11" fill="none" stroke="#e9482a" strokeWidth="3" /> },
  { name: 'Edge', dot: true, art: <><circle cx="12" cy="12" r="12" fill="#1a6fc4" /><path d="M1 8Q4 0 12 0q11 0 12 10 0 6-7 6-4 0-3-3 1-5-4-6-5-1-9 5z" fill="#4cc98b" /><path d="M5 12q1-5 6-5Q5 14 12 19q5 3 10 0-5 6-12 4-6-3-5-11z" fill="#123f86" /><path d="M11 11q2 0 2 4 4 3 10 1-6 4-10 1-3-2-2-6z" fill="#d6e9f2" /></> },
  { name: '资源管理器', dot: true, art: <><path d="M0 1h8l3 3-2 3H0z" fill="#d99a1c" /><path d="M0 6h8l3-2h13v19H0z" fill="#ffc93c" /><path d="M4 23v-5q0-2 2-2h11q2 0 2 2v5z" fill="#1572bf" /></> },
  { name: '录制', dot: true, art: <><circle cx="12" cy="12" r="11" fill="#fff" stroke="#999" /><circle cx="12" cy="12" r="10" fill="#0c0c0c" /><circle cx="12" cy="12" r="6" fill="#f63a2a" /></> },
  { name: '记事本', dot: true, art: <><path d="M3 2h18v19H3z" fill="#3fb1dc" /><path d="M3 21h18v3H3z" fill="#fff" /><path d="M3 23h18" stroke="#8b4a1c" strokeWidth="2" /><path d="M6 8h12M6 12h12M6 16h8" stroke="#0c4a66" strokeWidth="2" /><path d="M5 0v3M9 0v3M13 0v3M17 0v3" stroke="#0c4a66" strokeWidth="1" /></> },
  { name: 'AutoCAD', active: true, art: <><rect width="24" height="24" fill="#fdeee4" /><path d="M4 21L9 3h5l7 18h-4l-2-5H9l-1 5zM10 12h4l-2-6z" fill="#c0392b" fillRule="evenodd" /></> },
];

function Taskbar() {
  return (
    <TaskbarRow>
      <TaskCenter>
        <TaskButton aria-label="开始">
          <svg width="24" height="24" viewBox="0 0 24 24"><path d="M0 0h11v11H0zM12 0h11v11H12zM0 12h11v11H0zM12 12h11v11H12z" fill="#0b84d8" /></svg>
        </TaskButton>
        <TaskSearch>
          <Icon name="search" size={15} />
          <input type="text" aria-label="搜索" placeholder="搜索" />
          <svg width="42" height="24" viewBox="0 0 42 24">
            <path d="M11 1l6 2-9 20-7-1z" fill="#e85b8b" /><path d="M8 8l6 2-2 4-6-2z" fill="#f5c542" /><path d="M5 15l5 2-2 5-5-1z" fill="#3fae7a" />
            <path d="M24 4l-5 2-6 15 4 2 6-10M33 4l5 3 3 15-4 1-3-9" fill="#4a4f5c" /><path d="M23 3q5-4 10 0l3 18H23z" fill="#d2502c" /><path d="M28 3v18" stroke="#30313a" strokeWidth="2" />
          </svg>
        </TaskSearch>
        {TASK_ICONS.map((t) => (
          <TaskButton key={t.name} aria-label={t.name} $active={t.active} $dot={t.dot}>
            <svg width="24" height="24" viewBox="0 0 24 24">{t.art}</svg>
          </TaskButton>
        ))}
      </TaskCenter>
      <Tray>
        <TrayButton $w={30} aria-label="显示隐藏的图标"><Icon name="chevron" size={14} /></TrayButton>
        <TrayButton $w={32} aria-label="微信"><Icon name="wechat" /></TrayButton>
        <TrayButton $w={34} aria-label="麦克风"><Icon name="mic" /></TrayButton>
        <TrayButton $w={30}>英</TrayButton>
        <TrayButton $w={58} aria-label="网络和声音"><Icon name="wifi" /><Icon name="speaker" /></TrayButton>
        <Clock><time>19:37</time><time>2024/10/22</time></Clock>
        <TrayButton $w={30} aria-label="通知"><Icon name="bell" size={15} /></TrayButton>
      </Tray>
    </TaskbarRow>
  );
}

export default function App() {
  return (
    <Screen>
      <GlobalStyle />
      <AppWindow>
        <Header />
        <Frame>
          <TopDark>
            <TabRow>
              {TABS.map((t, i) => <TabButton key={t} $active={i === 0}>{t}</TabButton>)}
              <MinimizeRibbon aria-label="最小化功能区">
                <svg width="14" height="8" viewBox="0 0 14 8"><rect width="14" height="8" rx="2" fill={W} /><path d="M4 6h6L7 2z" fill="#212830" /></svg>
                <Caret $size={3} />
              </MinimizeRibbon>
            </TabRow>
            <Ribbon />
            <FileTabs>
              <FileTab>Drawing1*<Icon name="close" size={11} /></FileTab>
              <NewTab aria-label="新图形">+</NewTab>
            </FileTabs>
          </TopDark>
          <Workspace>
            <PropertiesPalette />
            <Canvas>
              <Drawing />
              <ViewLabel>[−][俯视][二维线框]</ViewLabel>
              <CommandLine />
            </Canvas>
            <LayerPalette />
          </Workspace>
          <StatusBar />
        </Frame>
      </AppWindow>
      <Taskbar />
    </Screen>
  );
}

const GlobalStyle = createGlobalStyle`
  * { box-sizing: border-box; }
  body {
    margin: 0;
    font: 12px/16px "Noto Sans", "Noto Sans CJK SC", sans-serif;
    color: #e4e6ea;
  }
  button, input, select {
    font: inherit;
    color: inherit;
    background: none;
    border: 0;
    border-radius: 0;
    padding: 0;
    margin: 0;
    min-width: 0;
    outline: none;
  }
  select { appearance: none; }
  svg { display: block; flex: none; }
`;

const Screen = styled.div`
  min-height: 100vh;
  display: flex;
  flex-direction: column;
  background: linear-gradient(#bcc8d6 0 584px, #d6b9ae 584px 646px, #34566b 646px 904px, #8a8a88 1000px);
`;

const AppWindow = styled.div`
  flex: 1;
  display: flex;
  flex-direction: column;
  margin: 2px 3px 0;
  background: #3b4453;
`;

const Caret = styled.i`
  flex: none;
  width: 0;
  height: 0;
  border: ${(p) => p.$size}px solid transparent;
  border-top-color: ${(p) => p.$color || '#d9dbde'};
  border-bottom-width: 0;
`;

const UpCaret = styled.i`
  flex: none;
  width: 0;
  height: 0;
  border: 4px solid transparent;
  border-top-width: 0;
  border-bottom: 6px solid ${(p) => (p.$light ? '#a5acb6' : '#333')};
`;

const RightCaret = styled.i`
  border: 4px solid transparent;
  border-left-color: #d9dbde;
  border-right-width: 0;
  margin-right: 6px;
`;

const CaretSlot = styled.span`
  width: 12px;
  display: flex;
  justify-content: center;
  margin-left: auto;
`;

const IconButton = styled.button`
  flex: none;
  width: ${(p) => p.$w || 24}px;
  height: 24px;
  display: flex;
  align-items: center;
  justify-content: center;
  ${(p) => p.$active && css`
    background: #3a5a78;
    border: 1px solid #7db7e6;
  `}
`;

const Swatch = styled.i`
  flex: none;
  width: ${(p) => p.$size}px;
  height: ${(p) => p.$size}px;
  background: #fff;
  outline: 1px solid #14181e;
`;

const LineSample = styled.i`
  flex: none;
  width: ${(p) => p.$w}px;
  height: 1px;
  background: #fff;
`;

const Divider = styled.i`
  width: 1px;
  height: 16px;
  background: #6b7684;
  margin: 0 4px;
`;

const Spacer = styled.div`
  flex: 1;
`;

const TitleBlock = styled.header`
  display: flex;
  height: 49px;
  background: #212830;
  border-bottom: 1px solid #3f4956;
`;

const LogoButton = styled.button`
  width: 40px;
  height: 39px;
  margin: 5px 3px;
  border: 1px solid #0c0f12;
  background: linear-gradient(#8d8d8d, #d6d6d6);
`;

const TitleRows = styled.div`
  flex: 1;
  display: flex;
  flex-direction: column;
`;

const TitleRow = styled.div`
  display: flex;
  align-items: center;
  height: 29px;
  padding: 0 4px 0 3px;
  ${CaretSlot} {
    margin-left: 0;
  }
`;

const AppTitle = styled.div`
  flex: 1;
  display: flex;
  justify-content: center;
  gap: 18px;
  padding-right: 6px;
  color: #f0f1f3;
`;

const HelpSearch = styled.input`
  width: 178px;
  height: 20px;
  padding: 0 3px;
  background: #434e5f;
  &::placeholder {
    color: #b6bcc6;
    font-style: italic;
  }
`;

const LoginButton = styled.button`
  display: flex;
  align-items: center;
  gap: 5px;
  width: 122px;
  padding: 0 7px 0 4px;
  ${Caret} {
    margin-left: auto;
  }
`;

const WindowButtons = styled.div`
  display: flex;
  margin-left: 17px;
`;

const MenuRow = styled.nav`
  display: flex;
  align-items: center;
  gap: 24px;
  height: 19px;
  padding: 1px 4px 0 12px;
  color: #b9bdc3;
`;

const MenuButton = styled.button`
  white-space: nowrap;
`;

const DocButtons = styled.div`
  display: flex;
  margin-left: auto;
`;

const Frame = styled.div`
  flex: 1;
  display: flex;
  flex-direction: column;
  padding: 0 3px 4px;
`;

const TopDark = styled.div`
  background: #212830;
  padding: 3px 2px 0;
`;

const TabRow = styled.div`
  display: flex;
  height: 18px;
  padding-left: 1px;
`;

const TabButton = styled.button`
  padding: 0 10px;
  color: ${(p) => (p.$active ? '#f2f3f5' : '#a9aeb6')};
  background: ${(p) => (p.$active ? '#3b4453' : 'none')};
`;

const MinimizeRibbon = styled.button`
  display: flex;
  align-items: center;
  gap: 4px;
  margin-left: 22px;
`;

const RibbonBar = styled.div`
  display: flex;
  height: 97px;
`;

const PanelBox = styled.section`
  flex: none;
  width: ${(p) => p.$w}px;
  display: flex;
  flex-direction: column;
  background: #3b4453;
  border-right: 1px solid #212830;
`;

const PanelBody = styled.div`
  display: flex;
  height: 80px;
  padding: 5px 0 3px 2px;
`;

const PanelTitle = styled.div`
  position: relative;
  display: flex;
  align-items: center;
  justify-content: center;
  gap: 5px;
  height: 17px;
  white-space: nowrap;
`;

const Launcher = styled.button`
  position: absolute;
  right: ${(p) => (p.$near ? 3 : 5)}px;
`;

const LargeButton = styled.button`
  width: ${(p) => p.$w}px;
  display: flex;
  flex-direction: column;
  align-items: center;
  line-height: 17px;
  white-space: nowrap;
  padding-top: ${(p) => (p.$active ? 1 : 2)}px;
  svg {
    margin-bottom: 1px;
  }
  ${Caret} {
    margin-top: 3px;
  }
  ${(p) => p.$active && css`
    background: #3a5a74;
    border: 1px solid #7db7e6;
  `}
`;

const Tool = styled.button`
  display: flex;
  align-items: center;
  gap: 5px;
  height: 24px;
  padding: 0 2px;
  white-space: nowrap;
`;

const ToolColumn = styled.div`
  width: ${(p) => p.$w}px;
  display: flex;
  flex-direction: column;
  margin-left: 3px;
`;

const ToolRow = styled.div`
  display: flex;
`;

const IconColumn = styled.div`
  margin-left: 1px;
`;

const LayerTools = styled.div`
  flex: 1;
  padding: 0 1px;
`;

const ComboBox = styled.div`
  flex: 1;
  display: flex;
  align-items: center;
  gap: ${(p) => p.$gap || 0}px;
  height: 22px;
  margin: 1px 0;
  padding: 0 2px 0 ${(p) => (p.$pad === undefined ? 3 : p.$pad)}px;
  background: #4c5a70;
  border: 1px solid #2b333f;
  select {
    flex: 1;
  }
`;

const PropertyCombos = styled.div`
  flex: 1;
  display: grid;
  grid-template-columns: 18px 1fr;
  grid-auto-rows: 24px;
  align-items: center;
  padding: 0 1px 0 3px;
`;

const FileTabs = styled.div`
  display: flex;
  height: 27px;
  padding: 6px 0 0 13px;
`;

const FileTab = styled.button`
  display: flex;
  align-items: center;
  justify-content: space-between;
  width: 132px;
  padding: 0 14px 0 17px;
  background: #3b4453;
  clip-path: polygon(0 100%, 6px 4px, 12px 0, 118px 0, 124px 4px, 100% 100%);
`;

const NewTab = styled.button`
  width: 20px;
  height: 14px;
  margin: 4px 0 0 6px;
  border-radius: 2px 6px 6px 2px;
  background: #323a46;
  font-size: 16px;
  line-height: 14px;
  color: #b5bac2;
`;

const Workspace = styled.main`
  flex: 1;
  display: flex;
  padding-top: 4px;
`;

const LeftPalette = styled.aside`
  position: relative;
  flex: none;
  width: 339px;
  padding: 2px 2px 0 1px;
`;

const PaletteTitle = styled.div`
  display: flex;
  align-items: center;
  gap: 6px;
  height: 22px;
  padding: 0 0 1px 5px;
  border-radius: 4px;
  background: #2d323d;
`;

const Grip = styled.i`
  width: ${(p) => (p.$tall ? 6 : 3)}px;
  height: ${(p) => (p.$tall ? 18 : 9)}px;
  background: repeating-linear-gradient(#9aa0a9 0 1px, transparent 1px 3px);
`;

const PaletteBody = styled.div`
  padding: 12px 11px 0 16px;
`;

const SelectionRow = styled.div`
  display: flex;
  align-items: center;
  gap: 8px;
  margin-bottom: 3px;
`;

const Section = styled.section`
  margin-bottom: 3px;
`;

const SectionTitle = styled.div`
  display: flex;
  align-items: center;
  justify-content: space-between;
  height: 22px;
  padding: 0 9px 0 7px;
  background: #2d323d;
  color: #f4f5f7;
  font-weight: 700;
`;

const PropTable = styled.table`
  width: calc(100% - 17px);
  margin-left: 17px;
  border-collapse: separate;
  border-spacing: 0;
  table-layout: fixed;
  th, td {
    height: 21px;
    border-bottom: 1px solid #2f3744;
    border-right: 1px solid #2f3744;
  }
  th {
    width: 134px;
    padding: 0 0 3px 6px;
    text-align: left;
    font-weight: 400;
    line-height: 17px;
    color: #cdd1d8;
    border-left: 1px solid #2f3744;
  }
`;

const PropValue = styled.td`
  padding: 1px 0 0 2px;
  line-height: 17px;
  color: ${(p) => (p.$muted ? '#8d949f' : '#eceef1')};
  div {
    display: flex;
    align-items: center;
    gap: 6px;
  }
  ${Swatch} {
    margin-left: 2px;
  }
`;

const Pointer = styled.div`
  position: absolute;
  left: 130px;
  top: 489px;
  mix-blend-mode: multiply;
`;

const PointerArrow = styled.svg`
  position: absolute;
  left: 159px;
  top: 518px;
`;

const Canvas = styled.div`
  position: relative;
  flex: 1;
  display: flex;
  flex-direction: column;
  justify-content: space-between;
  background: #000;
`;

const DrawingSvg = styled.svg`
  position: absolute;
  inset: 0;
  width: 100%;
  height: 100%;
`;

const ViewLabel = styled.div`
  position: relative;
  padding: 6px 3px;
`;

const CommandArea = styled.div`
  position: relative;
  width: 64%;
  margin: 0 18%;
`;

const HistoryLine = styled.div`
  width: max-content;
  height: 16px;
  margin: 4px 0 0 62px;
  padding: 0 2px;
  border-radius: 2px;
  background: #484848;
  color: ${(p) => p.$color};
  font-size: 13px;
  line-height: 16px;
  white-space: pre;
  code {
    font: 12px/16px "DejaVu Sans Mono", monospace;
  }
`;

const CommandBar = styled.div`
  display: flex;
  align-items: center;
  height: 26px;
  margin-top: 3px;
  padding-left: 4px;
  background: #252a33;
`;

const CommandBox = styled.div`
  flex: 1;
  display: flex;
  align-items: center;
  gap: 3px;
  height: 25px;
  margin-left: 4px;
  padding: 0 3px;
  border-radius: 2px;
  background: #b0b0b0;
  input {
    flex: 1;
    margin-left: 4px;
    font-size: 13px;
    font-style: italic;
  }
  input::placeholder {
    color: #555;
  }
`;

const RightPalette = styled.aside`
  position: relative;
  flex: none;
  width: 308px;
  display: flex;
  flex-direction: column;
  padding: 2px 1px 0 2px;
`;

const LayerHead = styled.div`
  display: flex;
  justify-content: space-between;
  padding: 7px 0 0 5px;
  span {
    padding-top: 4px;
  }
`;

const LayerSearch = styled.div`
  display: flex;
  align-items: center;
  width: 124px;
  height: 16px;
  background: #4c5a70;
  input {
    flex: 1;
  }
  input::placeholder {
    color: #a9b0bc;
  }
`;

const LayerToolbar = styled.div`
  display: flex;
  align-items: center;
  height: 25px;
  padding-right: 4px;
  ${Divider} {
    margin: 0 3px;
  }
`;

const LayerMain = styled.div`
  flex: 1;
  display: flex;
  gap: 4px;
`;

const FilterStrip = styled.div`
  width: 26px;
  display: flex;
  flex-direction: column;
  justify-content: space-between;
  align-items: center;
  padding: 0 0 4px;
  border: 1px solid #2f3744;
  font-size: 18px;
`;

const LayerList = styled.div`
  flex: 1;
  display: flex;
  flex-direction: column;
`;

const LayerTable = styled.table`
  width: 100%;
  border-collapse: separate;
  border-spacing: 0;
  table-layout: fixed;
  th {
    height: 23px;
    padding: 0 0 0 3px;
    overflow: hidden;
    font-weight: 400;
    text-align: left;
    background: #434e60;
    border-right: 1px solid #2f3744;
    white-space: nowrap;
  }
  td {
    height: 18px;
    padding: 0 0 0 3px;
    background: #7186a8;
  }
  th:nth-child(2), td:nth-child(2) {
    border-right: 2px solid #2f3744;
  }
  td:first-child {
    padding: 0;
  }
`;

const NameHead = styled.div`
  display: flex;
  align-items: center;
  justify-content: space-between;
  padding: 0 2px 0 2px;
`;

const ColorCell = styled.div`
  display: flex;
  align-items: center;
  gap: 6px;
`;

const ListFill = styled.div`
  flex: 1;
  width: 162px;
  border-right: 1px solid #2f3744;
`;

const ListScroll = styled.div`
  display: flex;
  align-items: center;
  height: 17px;
  padding-left: 17px;
  background: #f0f0f0;
  i {
    width: 50px;
    height: 2px;
    background: #858585;
  }
`;

const LayerFoot = styled.div`
  display: flex;
  align-items: center;
  gap: 4px;
  height: 39px;
  padding-top: 9px;
  white-space: nowrap;
  color: #f2f3f5;
  button {
    display: flex;
    align-items: center;
    justify-content: space-between;
    width: 30px;
    height: 21px;
    padding: 0 2px;
    border: 1px solid #d9dbde;
    border-radius: 3px;
  }
`;

const Watermark = styled.div`
  position: absolute;
  right: 92px;
  bottom: 16px;
  width: 191px;
  display: flex;
  flex-direction: column;
  white-space: nowrap;
  color: rgba(160, 160, 160, 0.8);
  pointer-events: none;
  b {
    font-size: 20px;
    font-weight: 400;
    line-height: 26px;
  }
  span {
    font-size: 15px;
    line-height: 20px;
  }
`;

const StatusRow = styled.footer`
  display: flex;
  justify-content: space-between;
  height: 29px;
  margin-top: 1px;
  padding: 0 2px 0 10px;
  background: #212830;
`;

const LayoutTabs = styled.div`
  display: flex;
  gap: 2px;
`;

const LayoutTab = styled.button`
  width: ${(p) => (p.$plus ? 28 : 51)}px;
  height: 18px;
  color: ${(p) => (p.$active ? '#fff' : '#b5bac2')};
  font-weight: ${(p) => (p.$active ? 700 : 400)};
  background: ${(p) => (p.$active ? '#3b4453' : '#2b323d')};
  clip-path: polygon(0 0, 100% 0, calc(100% - 6px) 100%, 6px 100%);
`;

const StatusTools = styled.div`
  display: flex;
  gap: 3px;
  padding-top: 2px;
`;

const StatusGroup = styled.div`
  display: flex;
  height: 24px;
  background: #3b4453;
`;

const StatusButton = styled.button`
  width: ${(p) => p.$w}px;
  display: flex;
  align-items: center;
  justify-content: center;
  background: ${(p) => (p.$active ? '#5b8ec4' : 'none')};
  border-right: ${(p) => (p.$w === 25 ? '1px solid #212830' : '0')};
`;

const UnitSelect = styled.div`
  display: flex;
  align-items: center;
  justify-content: space-between;
  width: 74px;
  padding: 0 5px;
  font-weight: 700;
  border-right: 1px solid #212830;
`;

const TaskbarRow = styled.div`
  display: grid;
  grid-template-columns: 1fr auto 1fr;
  align-items: center;
  height: 48px;
  padding-top: 2px;
  background: linear-gradient(90deg, #d9e7e6, #dfe6e9 12%, #d2e9f1 24%, #d8e8f1 60%, #d5e8f2);
  border-bottom: 2px solid #b0efbf;
  color: #1b1b1b;
`;

const TaskCenter = styled.div`
  grid-column: 2;
  display: flex;
  align-items: center;
  margin-left: 2px;
`;

const TaskButton = styled.button`
  position: relative;
  width: 44px;
  height: 40px;
  display: flex;
  align-items: center;
  justify-content: center;
  ${(p) => p.$active && css`
    background: #efb3ac;
    background-clip: content-box;
    padding: 0 3px;
    border-radius: 6px;
  `}
  &::after {
    content: '';
    display: ${(p) => (p.$active || p.$dot ? 'block' : 'none')};
    position: absolute;
    left: 50%;
    bottom: 1px;
    width: ${(p) => (p.$active ? 16 : 6)}px;
    height: 3px;
    border-radius: 2px;
    transform: translateX(-50%);
    background: ${(p) => (p.$active ? '#c23b28' : '#7e8a92')};
  }
`;

const TaskSearch = styled.label`
  display: flex;
  align-items: center;
  gap: 10px;
  width: 217px;
  height: 31px;
  margin: 0 3px 0 4px;
  padding: 0 6px 0 9px;
  border: 1px solid #c3d2da;
  border-radius: 16px;
  background: #f5fafc;
  input {
    flex: 1;
    font-size: 14px;
  }
  input::placeholder {
    color: #333;
  }
`;

const Tray = styled.div`
  justify-self: end;
  display: flex;
  align-items: center;
  padding-right: 12px;
`;

const TrayButton = styled.button`
  display: flex;
  align-items: center;
  justify-content: center;
  gap: 8px;
  width: ${(p) => p.$w}px;
  height: 32px;
  font-size: 15px;
`;

const Clock = styled.div`
  display: flex;
  flex-direction: column;
  align-items: flex-end;
  width: 72px;
`;
